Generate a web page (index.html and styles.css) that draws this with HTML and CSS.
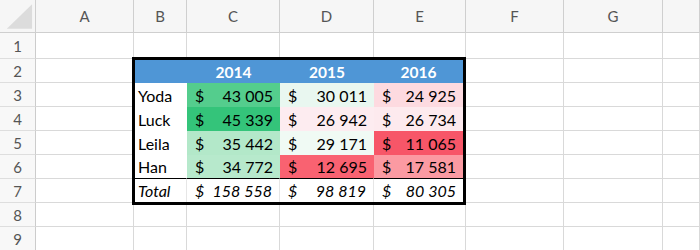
FILE: index.html
```html
<!DOCTYPE html>
<html>
<head>
<meta charset="utf-8">
<link rel="stylesheet" href="styles.css">
</head>
<body>
<div class="sheet">
  <div class="tbl">
    <div class="t-head"></div>
    <div class="t-head year">2014</div>
    <div class="t-head year">2015</div>
    <div class="t-head year">2016</div>

    <div class="name">Yoda</div>
    <div class="money" style="background:rgb(84,205,141)"><span>$</span><span>43 005</span></div>
    <div class="money" style="background:rgb(233,247,240)"><span>$</span><span>30 011</span></div>
    <div class="money" style="background:rgb(253,218,224)"><span>$</span><span>24 925</span></div>

    <div class="name">Luck</div>
    <div class="money" style="background:rgb(52,196,122)"><span>$</span><span>45 339</span></div>
    <div class="money" style="background:rgb(253,236,240)"><span>$</span><span>26 942</span></div>
    <div class="money" style="background:rgb(253,234,238)"><span>$</span><span>26 734</span></div>

    <div class="name">Leila</div>
    <div class="money" style="background:rgb(179,232,201)"><span>$</span><span>35 442</span></div>
    <div class="money" style="background:rgb(240,250,244)"><span>$</span><span>29 171</span></div>
    <div class="money" style="background:rgb(247,86,104)"><span>$</span><span>11 065</span></div>

    <div class="name">Han</div>
    <div class="money" style="background:rgb(183,233,204)"><span>$</span><span>34 772</span></div>
    <div class="money" style="background:rgb(249,98,113)"><span>$</span><span>12 695</span></div>
    <div class="money" style="background:rgb(251,154,162)"><span>$</span><span>17 581</span></div>

    <div class="name total">Total</div>
    <div class="money total"><span>$</span><span>158 558</span></div>
    <div class="money total"><span>$</span><span>98 819</span></div>
    <div class="money total last"><span>$</span><span>80 305</span></div>
  </div>

  <!-- header row -->
  <div class="c corner"><svg width="36" height="33" viewBox="0 0 36 33"><polygon points="7,29 33,4 33,29" fill="#dcdcdc"/></svg></div>
  <div class="c h">A</div><div class="c h">B</div><div class="c h">C</div><div class="c h">D</div><div class="c h">E</div><div class="c h">F</div><div class="c h">G</div><div class="c h"></div>

  <!-- row 1 -->
  <div class="c r">1</div><div class="c"></div><div class="c"></div><div class="c"></div><div class="c"></div><div class="c"></div><div class="c"></div><div class="c"></div><div class="c"></div>
  <!-- row 2 -->
  <div class="c r">2</div><div class="c"></div><div class="c"></div><div class="c"></div><div class="c"></div>
  <!-- row 3 -->
  <div class="c r">3</div><div class="c"></div><div class="c"></div><div class="c"></div><div class="c"></div>
  <!-- row 4 -->
  <div class="c r">4</div><div class="c"></div><div class="c"></div><div class="c"></div><div class="c"></div>
  <!-- row 5 -->
  <div class="c r">5</div><div class="c"></div><div class="c"></div><div class="c"></div><div class="c"></div>
  <!-- row 6 -->
  <div class="c r">6</div><div class="c"></div><div class="c"></div><div class="c"></div><div class="c"></div>
  <!-- row 7 -->
  <div class="c r">7</div><div class="c"></div><div class="c"></div><div class="c"></div><div class="c"></div>
  <!-- row 8 -->
  <div class="c r">8</div><div class="c"></div><div class="c"></div><div class="c"></div><div class="c"></div><div class="c"></div><div class="c"></div><div class="c"></div><div class="c"></div>
  <!-- row 9 -->
  <div class="c r">9</div><div class="c"></div><div class="c"></div><div class="c"></div><div class="c"></div><div class="c"></div><div class="c"></div><div class="c"></div><div class="c"></div>
</div>
</body>
</html>
```
FILE: styles.css
```css
html, body {
  margin: 0;
  padding: 0;
  background: #ffffff;
  overflow: hidden;
}

.sheet {
  width: 700px;
  height: 250px;
  display: grid;
  grid-template-columns: 36px 98px 53px 93px 94px 92px 98px 99px 1fr;
  grid-template-rows: 33px 26px repeat(8, 24px);
  font-family: Lato, "Open Sans", sans-serif;
  overflow: hidden;
}

.c {
  box-sizing: border-box;
  border-right: 1px solid #d9d9d9;
  border-bottom: 1px solid #d9d9d9;
  background: #ffffff;
}

.corner {
  background: #f6f6f6;
  border-color: #cfcfcf;
  display: flex;
}

.h {
  background: #f6f6f6;
  border-color: #cfcfcf;
  color: #555555;
  font-size: 15px;
  display: flex;
  align-items: center;
  justify-content: center;
}

.r {
  background: #f8f8f8;
  border-right-color: #cccccc;
  border-bottom-color: #dedede;
  color: #555555;
  font-size: 15px;
  display: flex;
  align-items: center;
  justify-content: center;
}

.tbl {
  grid-column: 3 / 7;
  grid-row: 3 / 9;
  margin: -2px 0 -2px -2px;
  border: 3px solid #000000;
  background: #ffffff;
  display: grid;
  grid-template-columns: 52px 93px 94px 1fr;
  grid-template-rows: 23px 24px 24px 24px 23px 1fr;
  font-size: 16px;
  color: #000000;
  position: relative;
  z-index: 1;
}

.t-head {
  background: #4f96d6;
  color: #ffffff;
  font-weight: 700;
  font-size: 15.5px;
  display: flex;
  align-items: center;
  justify-content: center;
}

.name {
  display: flex;
  align-items: center;
  padding-left: 3px;
}

.money {
  box-sizing: border-box;
  display: flex;
  align-items: center;
  justify-content: space-between;
  padding: 0 7px 0 8px;
}

.total {
  font-style: italic;
  border-top: 1px solid #000000;
  border-right: 1px solid #e6e6e6;
}

.total.last {
  border-right: none;
}
```
